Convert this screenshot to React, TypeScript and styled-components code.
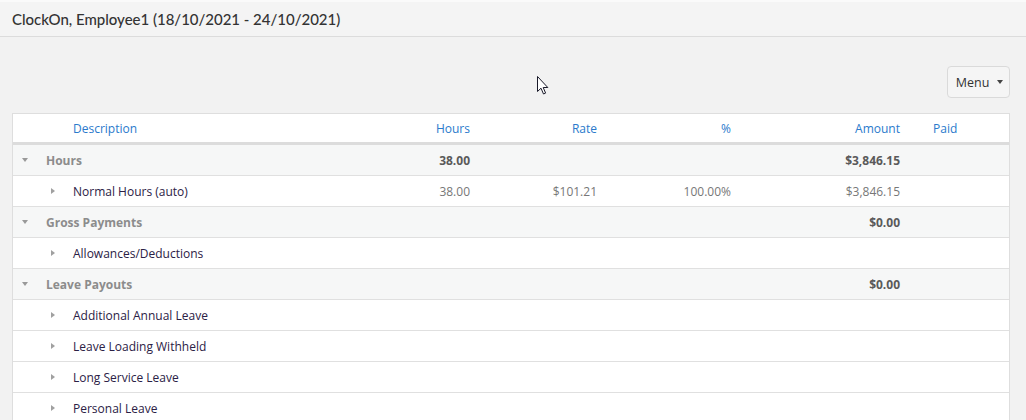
import React from "react";
import styled, { createGlobalStyle } from "styled-components";

const Global = createGlobalStyle`
  html, body { margin: 0; padding: 0; background: #f2f2f2; }
  body { font-family: "Open Sans", "Noto Sans", sans-serif; }
  * { box-sizing: border-box; }
`;

const Page = styled.div`
  position: relative;
  width: 1026px;
  height: 420px;
  overflow: hidden;
  background: #f2f2f2;
`;

const TitleBar = styled.div`
  height: 37px;
  display: flex;
  align-items: center;
  padding: 0 12px;
  background: #f4f4f4;
  border-top: 2px solid #fafafa;
  border-bottom: 1px solid #dcdcdc;
`;

const Title = styled.h1`
  margin: 0;
  font-family: "Lato", "Open Sans", sans-serif;
  font-size: 15px;
  font-weight: 500;
  color: #333;
  letter-spacing: -0.02px;
`;

const Content = styled.div`
  padding: 29px 16px 0 12px;
  display: flex;
  flex-direction: column;
  gap: 15px;
`;

const Toolbar = styled.div`
  display: flex;
  justify-content: flex-end;
`;

const MenuButton = styled.button`
  height: 32px;
  width: 63px;
  display: flex;
  align-items: center;
  justify-content: center;
  gap: 8px;
  padding: 0 0 0 2px;
  background: #f5f5f5;
  border: 1px solid #dadada;
  border-radius: 4px;
  font-family: "Open Sans", sans-serif;
  font-size: 12.5px;
  color: #333;
`;

const Caret = styled.span<{ $dir: "down" | "right"; $color?: string }>`
  display: inline-block;
  width: 0;
  height: 0;
  ${(p) =>
    p.$dir === "down"
      ? `border-left: 3.5px solid transparent; border-right: 3.5px solid transparent; border-top: 4px solid ${p.$color || "#444"};`
      : `border-top: 3.5px solid transparent; border-bottom: 3.5px solid transparent; border-left: 4px solid ${p.$color || "#999"};`}
`;

const Table = styled.div`
  width: 998px;
  background: #fff;
  border: 1px solid #dedede;
  border-bottom: none;
`;

const cols = "359px 106px 127px 134px 169px 1fr";

const HeadRow = styled.div`
  display: grid;
  grid-template-columns: ${cols};
  height: 31px;
  align-items: center;
  border-bottom: 3px solid #dcdcdc;
  font-size: 12px;
  color: #2a7acc;
`;

const Row = styled.div<{ $group?: boolean }>`
  display: grid;
  grid-template-columns: ${cols};
  height: 31px;
  align-items: center;
  border-bottom: 1px solid #e0e0e0;
  background: ${(p) => (p.$group ? "#f6f7f7" : "#fff")};
  font-size: 12px;
`;

const DescCell = styled.div<{ $indent: number }>`
  display: flex;
  align-items: center;
  padding-left: ${(p) => p.$indent}px;
`;

const CaretSlot = styled.span<{ $w: number }>`
  width: ${(p) => p.$w}px;
  display: flex;
  align-items: center;
`;

const Label = styled.span<{ $group?: boolean }>`
  color: ${(p) => (p.$group ? "#8c8c8c" : "#2b2145")};
  font-weight: ${(p) => (p.$group ? 700 : 400)};
`;

const HeadLabel = styled.span`
  padding-left: 60px;
`;

const NumCell = styled.div<{ $bold?: boolean }>`
  text-align: right;
  padding-right: 8px;
  color: ${(p) => (p.$bold ? "#5a5a5a" : "#777")};
  font-weight: ${(p) => (p.$bold ? 700 : 400)};
`;

const HeadNum = styled.div`
  text-align: right;
  padding-right: 8px;
`;

const PaidHead = styled.div`
  padding-left: 25px;
`;

const Cursor = styled.svg`
  position: absolute;
  left: 537px;
  top: 76px;
`;

type Item = {
  label: string;
  group?: boolean;
  hours?: string;
  rate?: string;
  pct?: string;
  amount?: string;
};

const rows: Item[] = [
  { label: "Hours", group: true, hours: "38.00", amount: "$3,846.15" },
  { label: "Normal Hours (auto)", hours: "38.00", rate: "$101.21", pct: "100.00%", amount: "$3,846.15" },
  { label: "Gross Payments", group: true, amount: "$0.00" },
  { label: "Allowances/Deductions" },
  { label: "Leave Payouts", group: true, amount: "$0.00" },
  { label: "Additional Annual Leave" },
  { label: "Leave Loading Withheld" },
  { label: "Long Service Leave" },
  { label: "Personal Leave" },
];

export default function App() {
  return (
    <Page>
      <Global />
      <TitleBar>
        <Title>ClockOn, Employee1 (18/10/2021 - 24/10/2021)</Title>
      </TitleBar>
      <Content>
        <Toolbar>
          <MenuButton>
            Menu <Caret $dir="down" $color="#444" />
          </MenuButton>
        </Toolbar>
        <Table>
          <HeadRow>
            <HeadLabel>Description</HeadLabel>
            <HeadNum>Hours</HeadNum>
            <HeadNum>Rate</HeadNum>
            <HeadNum>%</HeadNum>
            <HeadNum>Amount</HeadNum>
            <PaidHead>Paid</PaidHead>
          </HeadRow>
          {rows.map((r) => (
            <Row key={r.label} $group={r.group}>
              <DescCell $indent={r.group ? 9 : 38}>
                <CaretSlot $w={r.group ? 24 : 22}>
                  {r.group ? <Caret $dir="down" $color="#999" /> : <Caret $dir="right" $color="#a0a0a0" />}
                </CaretSlot>
                <Label $group={r.group}>{r.label}</Label>
              </DescCell>
              <NumCell $bold={r.group}>{r.hours}</NumCell>
              <NumCell $bold={r.group}>{r.rate}</NumCell>
              <NumCell $bold={r.group}>{r.pct}</NumCell>
              <NumCell $bold={r.group}>{r.amount}</NumCell>
              <div />
            </Row>
          ))}
        </Table>
      </Content>
      <Cursor width="12" height="20" viewBox="0 0 12 20">
        <path d="M0.5 0.5 L0.5 15.5 L4 12.2 L6.5 18 L8.6 17.1 L6.2 11.5 L10.8 11.5 Z" fill="#fff" stroke="#1a1a2a" strokeWidth="1" />
      </Cursor>
    </Page>
  );
}
